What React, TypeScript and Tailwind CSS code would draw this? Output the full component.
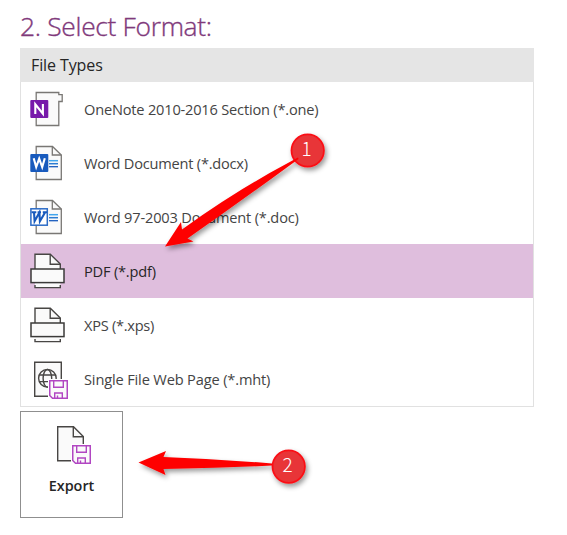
import type { ReactNode } from "react";

function Floppy({ x, y }: { x: number; y: number }) {
  return (
    <g transform={`translate(${x} ${y})`}>
      <path d="M-1-1H20V20H-1Z" fill="#fff" />
      <path d="M.75.75H18.25V18.25H3.5L.75 15.5Z" fill="#fafafa" stroke="#b146c2" strokeWidth="1.5" />
      <path d="M4.7 1V7.3H14.3V1M5.7 18V13H13.3V18M8.5 15.5V18" fill="none" stroke="#b146c2" strokeWidth="1.4" />
    </g>
  );
}

function OneNoteIcon() {
  return (
    <>
      <path d="M16.2 10.5H38.8V12.7H42.2V19.5H38.8V43.5H16.2Z" fill="#fafafa" stroke="#797774" strokeWidth="1.3" />
      <rect x="10.3" y="18" width="18" height="18" rx="1" fill="#7719aa" />
      <path d="M15.3 32V22.3L22.9 31.7V22" fill="none" stroke="#fff" strokeWidth="2.1" />
    </>
  );
}

function WordIcon({ legacy = false }: { legacy?: boolean }) {
  return (
    <>
      <path d="M16.2 10.5H32.5L41.3 19V43.5H16.2Z" fill="#fafafa" stroke="#797774" strokeWidth="1.3" />
      <path d="M32.3 10.5V19H41.3" fill="none" stroke="#797774" strokeWidth="1.3" />
      <path d="M29 24.7H38" stroke="#41a5ee" strokeWidth="1.5" />
      <path d="M29 27.7H38" stroke="#2b7cd3" strokeWidth="1.5" />
      <path d="M29 30.7H38" stroke="#185abd" strokeWidth="1.3" />
      {legacy ? (
        <>
          <rect x="10.9" y="18.8" width="16.4" height="16.4" fill="#fff" stroke="#2b6bc6" strokeWidth="1.5" />
          <path d="M11.5 22.3H16.3M14 22.3L14.6 31.2L19.4 22.5L19.9 31.2L25.2 22.3M17.6 22.3H21M22.8 22.3H27" fill="none" stroke="#185abd" strokeWidth="2.1" />
        </>
      ) : (
        <>
          <rect x="10.3" y="18" width="18" height="18" rx="1" fill="#185abd" />
          <path d="M13.7 22.2L16.2 31L19.2 22.6L22.2 31L24.8 22.2" fill="none" stroke="#fff" strokeWidth="2.1" />
        </>
      )}
    </>
  );
}

function PrintedPageIcon() {
  return (
    <>
      <path d="M15 25V10.3H30.3L40.3 20V25" fill="#fafafa" stroke="#484644" strokeWidth="1.4" />
      <path d="M30.2 10.5V20.2H40.2" fill="none" stroke="#484644" strokeWidth="1.4" />
      <path d="M15 38V43.6H40.3V38Z" fill="#fafafa" />
      <path d="M15 41V43.6H40.3V41" fill="none" stroke="#484644" strokeWidth="1.4" />
      <rect x="11" y="25" width="33" height="13.6" fill="#fafafa" stroke="#3b3a39" strokeWidth="1.5" />
    </>
  );
}

function WebPageIcon() {
  return (
    <>
      <path d="M14.7 10.2H41.3V44.2H14.7Z" fill="#fafafa" stroke="#484644" strokeWidth="1.4" />
      <g fill="none" stroke="#484644" strokeWidth="1.4">
        <circle cx="27.4" cy="26.3" r="8.8" />
        <ellipse cx="27.4" cy="26.3" rx="4.3" ry="8.8" />
        <path d="M19.3 23H35.5M19.3 29.6H35.5" />
      </g>
      <Floppy x={29} y={28} />
    </>
  );
}

type FileType = { label: string; icon: ReactNode; tracking: string; selected?: boolean };

const fileTypes: FileType[] = [
  { label: "OneNote 2010-2016 Section (*.one)", icon: <OneNoteIcon />, tracking: "tracking-[-0.19px]" },
  { label: "Word Document (*.docx)", icon: <WordIcon />, tracking: "tracking-[-0.22px]" },
  { label: "Word 97-2003 Document (*.doc)", icon: <WordIcon legacy />, tracking: "tracking-[-0.17px]" },
  { label: "PDF (*.pdf)", icon: <PrintedPageIcon />, tracking: "tracking-[-0.2px]", selected: true },
  { label: "XPS (*.xps)", icon: <PrintedPageIcon />, tracking: "tracking-[-0.27px]" },
  { label: "Single File Web Page (*.mht)", icon: <WebPageIcon />, tracking: "tracking-[-0.15px]" },
];

function Callouts() {
  return (
    <svg className="pointer-events-none absolute inset-0" width="567" height="535" viewBox="0 0 567 535">
      <defs>
        <filter id="shadow" x="-20%" y="-30%" width="140%" height="180%">
          <feDropShadow dx="2" dy="3" stdDeviation="2.5" floodColor="#000" floodOpacity="0.4" />
        </filter>
      </defs>
      <g filter="url(#shadow)">
        <circle cx="307.7" cy="150.5" r="16.2" fill="#e83437" stroke="#fa1115" strokeWidth="1.8" />
        <path d="M165 246.5L181 222L182 229.5Q238 189 298 157.5L298.5 159Q244 199 187.5 238.5L193.5 241.5Z" fill="#fe0000" />
      </g>
      <g filter="url(#shadow)">
        <circle cx="288.7" cy="466.6" r="16.2" fill="#e83437" stroke="#fa1115" strokeWidth="1.8" />
        <path d="M138.5 462.5L166 451L163.5 457Q218 459 272 463.5V465.5Q218 468 163.5 469L165.5 475Z" fill="#fe0000" />
      </g>
      <g fill="#fff" fontFamily="'Noto Sans CJK SC', 'Open Sans', sans-serif" fontSize="19" fontWeight="300" textAnchor="middle">
        <text x="306.7" y="156">1</text>
        <text x="287.5" y="472">2</text>
      </g>
    </svg>
  );
}

export default function App() {
  return (
    <main className="relative h-[535px] w-[567px] overflow-hidden bg-white font-['Open_Sans','Noto_Sans',sans-serif] text-[#444]">
      <h1 className="h-12 pl-5 pt-2 text-[26.4px] font-light leading-[36px] tracking-[-0.32px] whitespace-nowrap text-[#80397b] [-webkit-text-stroke:0.35px_#80397b]">2. Select Format:</h1>
      <section className="ml-5 h-[359px] w-[514px] border border-t-0 border-[#e1e1e1]">
        <h2 className="-mx-px h-[34px] bg-[#e5e5e5] pl-[11px] text-[16px] leading-[34px] text-[#262626]"><span className="tracking-[-0.1px]">File Types</span></h2>
        <ul>
          {fileTypes.map((type) => (
            <li key={type.label} className={`flex h-[54px] items-center ${type.selected ? "bg-[#dfbedd] text-[#262626]" : ""}`}>
              <svg className="-ml-px shrink-0" width="64" height="54" viewBox="0 0 64 54">{type.icon}</svg>
              <span className={`whitespace-nowrap text-[14.6px] leading-5 ${type.tracking}`}>{type.label}</span>
            </li>
          ))}
        </ul>
      </section>
      <button className="ml-5 mt-1 flex h-[107px] w-[103px] flex-col items-center border border-[#8f8f8f] bg-white text-[#262626]">
        <svg className="mr-px mt-[13px] shrink-0" width="40" height="42" viewBox="0 0 40 42">
          <path d="M6.7 1.7H22.5L32.3 11.5V35.8H6.7Z" fill="#fafafa" stroke="#484644" strokeWidth="1.4" />
          <path d="M22.3 1.7V11.7H32.3" fill="none" stroke="#484644" strokeWidth="1.4" />
          <Floppy x={21} y={20} />
        </svg>
        <span className="mt-[9px] text-[14.4px] font-semibold leading-5">Export</span>
      </button>
      <Callouts />
    </main>
  );
}
